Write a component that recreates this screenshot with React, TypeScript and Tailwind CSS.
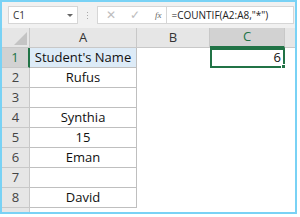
import React from "react";

const rows = ["Student's Name", "Rufus", "", "Synthia", "15", "Eman", "", "David"];

export default function App() {
    return (
        <div className="w-[300px] h-[217px] bg-white" style={{ fontFamily: '"Open Sans", sans-serif' }}>
            <div className="w-[297px] h-[214px] border-2 border-[#79d2f5] flex flex-col overflow-hidden bg-white">
                {/* formula bar */}
                <div className="h-[26px] shrink-0 bg-[#f1f1f1] flex items-center">
                    <div className="ml-[6px] w-[70px] h-[18px] bg-white border border-[#d6d6d6] flex items-center justify-between pl-[4px] pr-[4px]">
                        <span className="text-[10px] text-[#333] leading-none">C1</span>
                        <span className="w-0 h-0 border-l-[3px] border-r-[3px] border-t-[3px] border-l-transparent border-r-transparent border-t-[#666]" />
                    </div>
                    <div className="w-[19px] flex flex-col items-center gap-[2px]">
                        <span className="w-[1px] h-[1px] bg-[#aaa]" />
                        <span className="w-[1px] h-[1px] bg-[#aaa]" />
                        <span className="w-[1px] h-[1px] bg-[#aaa]" />
                    </div>
                    <div className="w-[197px] h-[18px] bg-white border border-[#d6d6d6] flex items-center">
                        <span className="ml-[8px] text-[12px] text-[#bdbdbd] leading-none">✕</span>
                        <span className="ml-[14px] text-[12px] text-[#bdbdbd] leading-none">✓</span>
                        <span className="ml-[15px] text-[9px] italic text-[#666] leading-none" style={{ fontFamily: '"Liberation Serif", serif' }}>fx</span>
                        <span className="ml-[4px] w-[1px] h-[16px] bg-[#d6d6d6]" />
                        <span className="ml-[5px] text-[10px] text-[#222] leading-none whitespace-nowrap">=COUNTIF(A2:A8,"*")</span>
                    </div>
                </div>

                {/* sheet */}
                <div className="grid grid-cols-[28px_107px_73px_75px_1fr] grid-rows-[20px_repeat(8,20px)_1fr] flex-1">
                    {/* header row */}
                    <div className="bg-[#e6e6e6] border-r border-b border-[#c8c8c8] relative">
                        <svg className="absolute right-[2px] bottom-[2px]" width="13" height="13" viewBox="0 0 13 13">
                            <polygon points="13,0 13,13 0,13" fill="#c4c4c4" />
                        </svg>
                    </div>
                    <div className="bg-[#e6e6e6] border-r border-b border-[#c8c8c8] flex items-center justify-center text-[13px] text-[#333]">A</div>
                    <div className="bg-[#e6e6e6] border-r border-b border-[#c8c8c8] flex items-center justify-center text-[13px] text-[#333]">B</div>
                    <div className="bg-[#d2d2d2] border-r border-[#c8c8c8] border-b-2 border-b-[#217346] flex items-center justify-center text-[13px] text-[#217346]">C</div>
                    <div className="bg-[#e6e6e6] border-b border-[#c8c8c8]" />

                    {rows.map((name, i) => (
                        <React.Fragment key={i}>
                            <div
                                className={
                                    i === 0
                                        ? "bg-[#d2d2d2] border-r-2 border-r-[#217346] border-b border-b-[#c8c8c8] flex items-center justify-center text-[13px] text-[#217346]"
                                        : "bg-[#e6e6e6] border-r border-b border-[#c8c8c8] flex items-center justify-center text-[13px] text-[#444]"
                                }
                            >
                                {i + 1}
                            </div>
                            <div
                                className={`border-r border-b border-[#bfbfbf] flex items-center justify-center text-[13px] text-[#111] whitespace-nowrap ${
                                    i === 0 ? "bg-[#ddebf7]" : "bg-white"
                                }`}
                            >
                                {name}
                            </div>
                            <div className="bg-white" />
                            {i === 0 ? (
                                <div className="relative border-2 border-[#217346] flex items-center justify-end pr-[2px] text-[13px] text-[#111]">
                                    6
                                    <span className="absolute -right-[3px] -bottom-[3px] w-[5px] h-[5px] bg-[#217346] border border-white" />
                                </div>
                            ) : (
                                <div className="bg-white" />
                            )}
                            <div className="bg-white" />
                        </React.Fragment>
                    ))}
                    <div className="bg-[#e6e6e6] border-r border-[#c8c8c8]" />
                    <div className="bg-white" />
                    <div className="bg-white" />
                    <div className="bg-white" />
                    <div className="bg-white" />
                </div>
            </div>
        </div>
    );
}
